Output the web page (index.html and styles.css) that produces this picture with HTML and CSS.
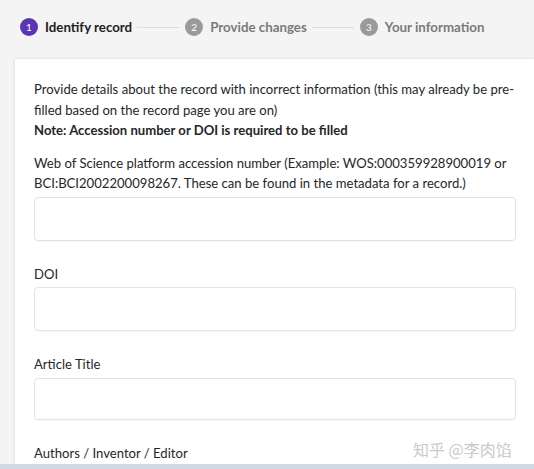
FILE: index.html
```html
<!DOCTYPE html>
<html>
<head>
<meta charset="utf-8">
<link rel="stylesheet" href="styles.css">
</head>
<body>
<div class="page">
  <div class="stepper">
    <div class="step active"><span class="num">1</span><span class="label">Identify record</span></div>
    <div class="line"></div>
    <div class="step"><span class="num">2</span><span class="label">Provide changes</span></div>
    <div class="line"></div>
    <div class="step"><span class="num">3</span><span class="label">Your information</span></div>
  </div>
  <div class="card">
    <p class="intro">Provide details about the record with incorrect information (this may already be pre-filled based on the record page you are on)<br><strong>Note: Accession number or DOI is required to be filled</strong></p>
    <div class="field">
      <label class="flabel">Web of Science platform accession number (Example: WOS:000359928900019 or BCI:BCI2002200098267. These can be found in the metadata for a record.)</label>
      <div class="input"></div>
    </div>
    <div class="field">
      <label class="flabel">DOI</label>
      <div class="input"></div>
    </div>
    <div class="field">
      <label class="flabel">Article Title</label>
      <div class="input short"></div>
    </div>
    <div class="field">
      <label class="flabel">Authors / Inventor / Editor</label>
    </div>
  </div>
  <div class="watermark">知乎 @李肉馅</div>
</div>
<div class="bottombar"></div>
</body>
</html>
```
FILE: styles.css
```css
html, body {
  margin: 0;
  padding: 0;
}
body {
  background: #f4f4f4;
  font-family: Lato, "Noto Sans", sans-serif;
  color: #262626;
  width: 534px;
  height: 469px;
  overflow: hidden;
  position: relative;
}
.page {
  height: 464px;
  overflow: hidden;
  position: relative;
}
.stepper {
  display: flex;
  align-items: center;
  padding: 18px 0 0 20px;
  height: 18px;
}
.step {
  display: flex;
  align-items: center;
  gap: 7px;
}
.num {
  width: 18px;
  height: 18px;
  border-radius: 50%;
  background: #9a9a9a;
  color: #fff;
  font-size: 10px;
  display: flex;
  align-items: center;
  justify-content: center;
}
.step.active .num {
  background: #5b35b8;
}
.label {
  font-size: 13.3px;
  font-weight: 700;
  color: #7a7a7a;
}
.step.active .label {
  color: #222;
}
.line {
  width: 42px;
  height: 1px;
  background: #dcdcdc;
  margin: 0 6px 0 5px;
}
.card {
  margin: 22px 0 0 14px;
  background: #fff;
  border: 1px solid #e8e8e8;
  border-right: none;
  padding: 20px 18px 0 19px;
  height: 420px;
  box-shadow: -1px 0 2px rgba(0,0,0,0.04);
}
.intro {
  margin: 0 0 12px;
  font-size: 13.1px;
  line-height: 20.5px;
}
.intro strong {
  font-weight: 700;
}
.field {
  margin-bottom: 23px;
}
.flabel {
  display: block;
  font-size: 13.1px;
  line-height: 20.5px;
  margin-bottom: 3px;
}
.input {
  height: 42px;
  border: 1px solid #e3e3e3;
  border-radius: 4px;
  box-shadow: 0 1px 1px rgba(0,0,0,0.03);
}
.input.short {
  height: 40px;
}
.watermark {
  position: absolute;
  left: 413px;
  top: 437px;
  font-size: 16px;
  color: #cacaca;
  font-family: "Noto Sans CJK SC", sans-serif;
}
.bottombar {
  height: 5px;
  background: #cfd9e4;
}
```
